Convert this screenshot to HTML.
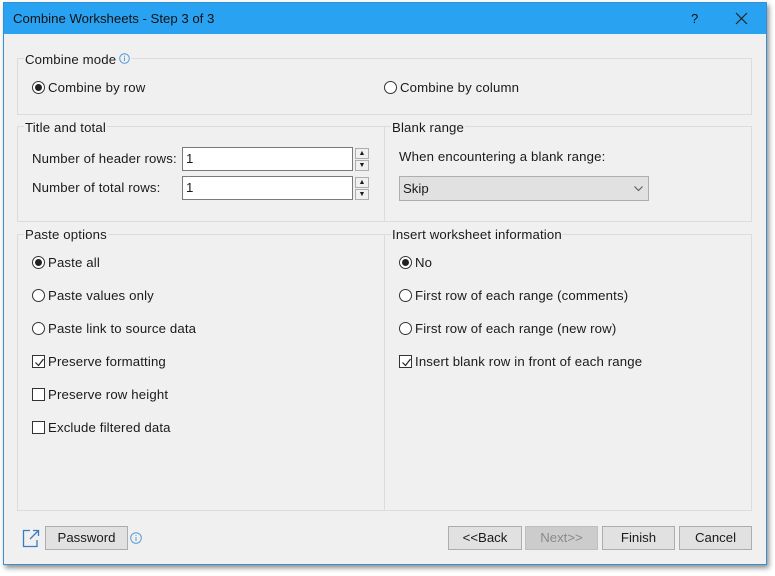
<!DOCTYPE html>
<html><head><style>
*{margin:0;padding:0;box-sizing:border-box}
body{width:775px;height:576px;background:#fff;font-family:"Liberation Sans","Noto Sans CJK SC",sans-serif;font-size:13.2px;color:#1a1a1a;position:relative;overflow:hidden}
.a{position:absolute}
.win{left:3px;top:2px;width:764px;height:563px;background:#f0f0f0;border:1px solid #3a8fd0;box-shadow:2px 3px 5px rgba(0,0,0,.45)}
.title{left:4px;top:3px;width:762px;height:31px;background:#29a3f1;color:#111}
.grp{border:1px solid #dcdcdc}
.leg{background:#f0f0f0;padding:0 1px;line-height:14px}
.rb{width:13px;height:13px;border:1px solid #333;border-radius:50%;background:#fff}
.rb.on::after{content:"";position:absolute;left:2px;top:2px;width:7px;height:7px;border-radius:50%;background:#222}
.cb{width:13px;height:13px;border:1px solid #333;background:#fff}
.lbl{line-height:15px;letter-spacing:0.15px}
.inp{background:#fff;border:1px solid #7a7a7a;padding-left:3px;line-height:22px}
.sp{width:14px;height:11px;border:1px solid #adadad;background:#f0f0f0;font-size:7px;text-align:center;line-height:9px}
.btn{height:24px;border:1px solid #adadad;background:#e1e1e1;text-align:center;line-height:22px}
</style></head><body>
<div class="a win"></div>
<div class="a title"><span class="a" style="left:9px;top:8px">Combine Worksheets - Step 3 of 3</span>
<span class="a" style="left:687px;top:8px;font-size:13px">?</span>
<svg class="a" style="left:731px;top:9px" width="13" height="13"><path d="M1 1L12 12M12 1L1 12" stroke="#222" stroke-width="1.2"/></svg></div>

<div class="a grp" style="left:17px;top:58px;width:735px;height:57px"></div>
<span class="a leg lbl" style="left:24px;top:52px;padding-right:16px">Combine mode</span>
<svg class="a" style="left:119px;top:53px" width="11" height="11"><circle cx="5.5" cy="5.5" r="4.8" fill="none" stroke="#5a9bd8"/><path d="M5.5 4.5v3.5M5.5 2.7v1" stroke="#5a9bd8"/></svg>
<div class="a rb on" style="left:32px;top:81px"></div><span class="a lbl" style="left:48px;top:80px">Combine by row</span>
<div class="a rb" style="left:384px;top:81px"></div><span class="a lbl" style="left:400px;top:80px">Combine by column</span>

<div class="a grp" style="left:17px;top:126px;width:368px;height:96px"></div>
<span class="a leg lbl" style="left:24px;top:120px">Title and total</span>
<span class="a lbl" style="left:32px;top:151px">Number of header rows:</span>
<div class="a inp" style="left:182px;top:147px;width:171px;height:24px">1</div>
<div class="a sp" style="left:355px;top:148px">▲</div><div class="a sp" style="left:355px;top:160px">▼</div>
<span class="a lbl" style="left:32px;top:180px">Number of total rows:</span>
<div class="a inp" style="left:182px;top:176px;width:171px;height:24px">1</div>
<div class="a sp" style="left:355px;top:177px">▲</div><div class="a sp" style="left:355px;top:189px">▼</div>

<div class="a grp" style="left:384px;top:126px;width:368px;height:96px"></div>
<span class="a leg lbl" style="left:391px;top:120px">Blank range</span>
<span class="a lbl" style="left:399px;top:149px">When encountering a blank range:</span>
<div class="a" style="left:399px;top:176px;width:250px;height:25px;background:#e1e1e1;border:1px solid #adadad;padding-left:3px;line-height:23px">Skip
<svg class="a" style="left:234px;top:9px" width="9" height="6"><path d="M0.5 0.5L4.5 4.5L8.5 0.5" fill="none" stroke="#555"/></svg></div>

<div class="a grp" style="left:17px;top:234px;width:368px;height:277px"></div>
<span class="a leg lbl" style="left:24px;top:227px">Paste options</span>
<div class="a grp" style="left:384px;top:234px;width:368px;height:277px"></div>
<span class="a leg lbl" style="left:391px;top:227px">Insert worksheet information</span>

<div class="a rb on" style="left:32px;top:256px"></div><span class="a lbl" style="left:48px;top:255px">Paste all</span>
<div class="a rb" style="left:32px;top:289px"></div><span class="a lbl" style="left:48px;top:288px">Paste values only</span>
<div class="a rb" style="left:32px;top:322px"></div><span class="a lbl" style="left:48px;top:321px">Paste link to source data</span>
<div class="a cb" style="left:32px;top:355px"><svg class="a" style="left:1px;top:1px" width="11" height="11"><path d="M1.5 5.5L4.5 8.5L9.5 2" fill="none" stroke="#222" stroke-width="1.2"/></svg></div><span class="a lbl" style="left:48px;top:354px">Preserve formatting</span>
<div class="a cb" style="left:32px;top:388px"></div><span class="a lbl" style="left:48px;top:387px">Preserve row height</span>
<div class="a cb" style="left:32px;top:421px"></div><span class="a lbl" style="left:48px;top:420px">Exclude filtered data</span>

<div class="a rb on" style="left:399px;top:256px"></div><span class="a lbl" style="left:415px;top:255px">No</span>
<div class="a rb" style="left:399px;top:289px"></div><span class="a lbl" style="left:415px;top:288px">First row of each range (comments)</span>
<div class="a rb" style="left:399px;top:322px"></div><span class="a lbl" style="left:415px;top:321px">First row of each range (new row)</span>
<div class="a cb" style="left:399px;top:355px"><svg class="a" style="left:1px;top:1px" width="11" height="11"><path d="M1.5 5.5L4.5 8.5L9.5 2" fill="none" stroke="#222" stroke-width="1.2"/></svg></div><span class="a lbl" style="left:415px;top:354px">Insert blank row in front of each range</span>

<svg class="a" style="left:21px;top:528px" width="20" height="20"><path d="M9 2.5H2.5V18.5H16V12" fill="none" stroke="#3a7cc4" stroke-width="1.3"/><path d="M9 11L17.5 2.5M12 2.5H17.5V8" fill="none" stroke="#3a7cc4" stroke-width="1.3"/></svg>
<div class="a btn" style="left:45px;top:526px;width:83px">Password</div>
<svg class="a" style="left:130px;top:532px" width="12" height="12"><circle cx="6" cy="6" r="5.3" fill="none" stroke="#5a9bd8"/><path d="M6 5v4M6 2.8v1" stroke="#5a9bd8"/></svg>
<div class="a btn" style="left:448px;top:526px;width:74px">&lt;&lt;Back</div>
<div class="a btn" style="left:525px;top:526px;width:73px;background:#cccccc;border-color:#bfbfbf;color:#8a8a8a">Next&gt;&gt;</div>
<div class="a btn" style="left:602px;top:526px;width:73px">Finish</div>
<div class="a btn" style="left:679px;top:526px;width:73px">Cancel</div>
</body></html>
